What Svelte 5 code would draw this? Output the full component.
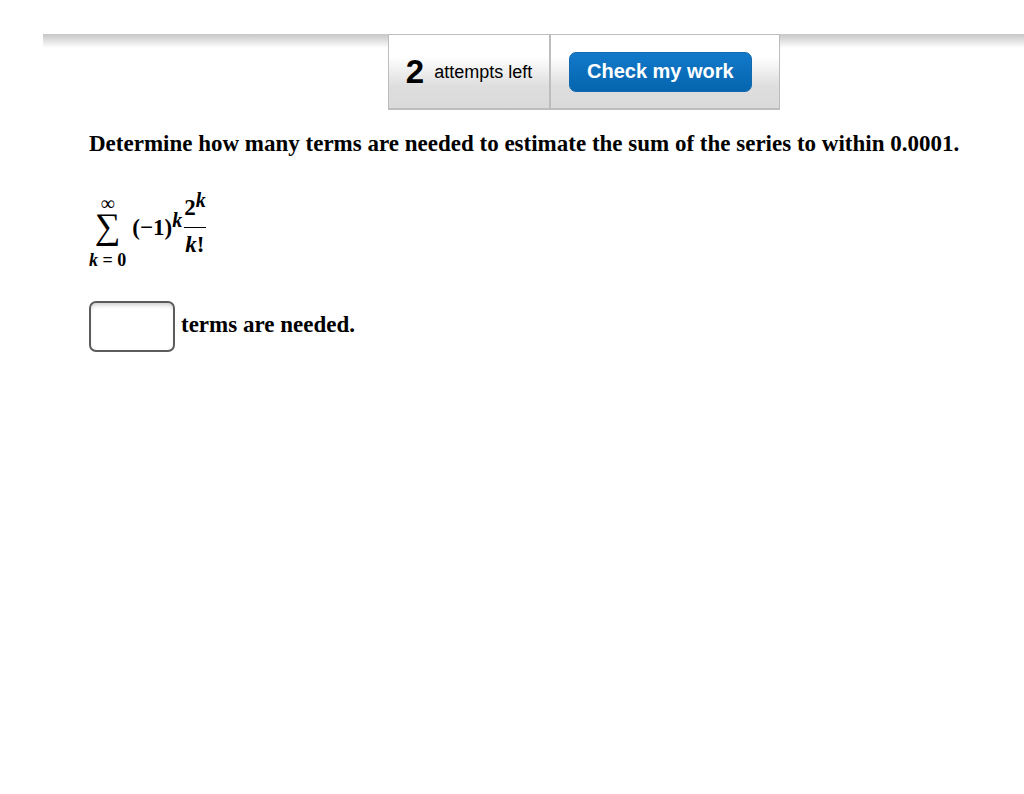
<script lang="ts">
  let attemptsLeft = $state(2);
  let answer = $state('');

  function check() {
    if (attemptsLeft > 0 && answer.trim() !== '') attemptsLeft -= 1;
  }
</script>

<header class="bar">
  <div class="panel">
    <div class="attempts">
      <strong>{attemptsLeft}</strong>
      <span>attempts left</span>
    </div>
    <div class="action">
      <button type="button" onclick={check}>Check my work</button>
    </div>
  </div>
</header>

<main>
  <p class="question">
    Determine how many terms are needed to estimate the sum of the series to within 0.0001.
  </p>

  <div class="formula">
    <div class="sum">
      <span class="limit upper">∞</span>
      <span class="sigma">∑</span>
      <span class="limit"><i>k</i> = 0</span>
    </div>
    <div class="base">(−1)<sup>k</sup></div>
    <div class="fraction">
      <div class="numerator">2<sup>k</sup></div>
      <div class="denominator"><i>k</i>!</div>
    </div>
  </div>

  <div class="answer">
    <input id="terms" type="text" autocomplete="off" bind:value={answer} />
    <label for="terms">terms are needed.</label>
  </div>
</main>

<style>
  :global(body) {
    background: #fff;
    color: #000;
  }
  .bar {
    margin: 34px 0 0 43px;
    background: linear-gradient(#c6c6c6, #fff) no-repeat 0 0 / 100% 14px;
  }
  .panel {
    display: flex;
    box-sizing: border-box;
    width: 392px;
    height: 76px;
    margin-left: 345px;
    border: 1px solid #bdbdbd;
    border-bottom-width: 2px;
    background: linear-gradient(#fff 30%, #dedede 70%, #dadada);
    font-family: 'Liberation Sans', Arial, sans-serif;
  }
  .attempts,
  .action {
    display: flex;
    align-items: center;
    padding-top: 1px;
  }
  .attempts {
    width: 160px;
    justify-content: center;
    gap: 10px;
    border-right: 2px solid #bdbdbd;
    font-size: 18px;
  }
  .attempts strong {
    font-size: 33px;
  }
  .action {
    padding-left: 18px;
  }
  button {
    height: 40px;
    padding: 0 17px 2px;
    border: 1px solid #1269ae;
    border-radius: 7px;
    background: linear-gradient(#1279ca, #0565ae);
    color: #fff;
    font: bold 20px 'Liberation Sans', Arial, sans-serif;
    cursor: pointer;
  }
  main {
    padding: 20px 40px 40px 89px;
    font: bold 23px/28px 'Liberation Serif', 'Times New Roman', serif;
  }
  .question {
    margin: 0;
  }
  .formula {
    display: flex;
    align-items: flex-start;
    margin-top: 36px;
  }
  .sum {
    display: flex;
    flex-direction: column;
    align-items: center;
    margin-right: 6px;
  }
  .limit {
    font-size: 18px;
    line-height: 24px;
  }
  .upper {
    font-size: 20px;
    font-weight: normal;
    line-height: 18px;
  }
  .sigma {
    padding-bottom: 8px;
    font-size: 36px;
    font-weight: normal;
    line-height: 28px;
  }
  sup {
    font-size: 20px;
    font-style: italic;
    line-height: 0;
    vertical-align: 8px;
  }
  .base {
    padding-top: 20px;
  }
  .fraction {
    margin-left: 2px;
  }
  .numerator {
    line-height: 28px;
    padding-bottom: 5px;
    border-bottom: 1px solid #000;
  }
  .denominator {
    line-height: 34px;
    text-align: center;
  }
  .answer {
    display: flex;
    align-items: center;
    gap: 6px;
    margin-top: 29px;
  }
  input {
    box-sizing: border-box;
    width: 86px;
    height: 51px;
    padding: 0 8px;
    border: 2px solid #5c5c5c;
    border-radius: 7px;
    background: #fff;
    box-shadow: inset 0 4px 4px -2px #ccc;
    font: inherit;
  }
  label {
    padding-bottom: 4px;
  }
</style>
